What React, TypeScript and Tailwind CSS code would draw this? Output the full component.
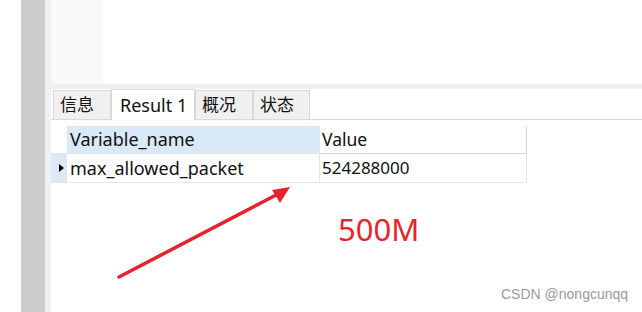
const font = { fontFamily: '"Noto Sans", "Noto Sans CJK SC", sans-serif' }

const tabs = [
  { label: "信息", w: "w-[58px]", active: false },
  { label: "Result 1", w: "w-[84px]", active: true },
  { label: "概况", w: "w-[58px]", active: false },
  { label: "状态", w: "w-[57px]", active: false },
]

function Arrow() {
  return (
    <svg className="absolute left-0 top-0" width="642" height="312" viewBox="0 0 642 312">
      <line x1="119" y1="277" x2="278" y2="194" stroke="#e8222b" strokeWidth="3.5" strokeLinecap="round" />
      <polygon points="290,187 272,190 280,203" fill="#e8222b" />
    </svg>
  )
}

export default function App() {
  return (
    <div className="relative flex h-[312px] w-[642px] overflow-hidden bg-white text-[#111]" style={font}>
      {/* left chrome */}
      <div className="w-[21px] shrink-0 bg-white" />
      <div className="w-[24px] shrink-0 bg-[#cccccc]" />
      <div className="w-[6px] shrink-0 bg-[#f0f0f0]" />

      <div className="flex flex-1 flex-col">
        {/* editor area */}
        <div className="flex h-[84px]">
          <div className="w-[52px] bg-[#f9f9f9]" />
          <div className="flex-1 bg-white" />
        </div>
        <div className="h-[5px] bg-[#f0f0f0]" />

        {/* tabs */}
        <div className="flex h-[31px] items-end border-b border-[#d9d9d9] pl-[2px]">
          {tabs.map((t) =>
            t.active ? (
              <div
                key={t.label}
                className={`${t.w} -mb-px flex h-[31px] items-center border border-b-0 border-[#d9d9d9] bg-white pl-[8px] text-[18px]`}
              >
                {t.label}
              </div>
            ) : (
              <div
                key={t.label}
                className={`${t.w} flex h-[29px] items-center border border-b-0 border-[#d9d9d9] bg-[#f0f0f0] pl-[6px] text-[17px]`}
              >
                {t.label}
              </div>
            ),
          )}
        </div>

        {/* result grid */}
        <div className="mt-[6px] flex w-[476px] flex-col">
          <div className="flex h-[28px]">
            <div className="w-[16px] border-b border-[#e5e5e5] bg-white" />
            <div className="flex w-[253px] items-center border-b border-r border-[#e5e5e5] bg-[#d9e9f7] pl-[3px] text-[18px]">
              Variable_name
            </div>
            <div className="flex w-[207px] items-center border-b border-r border-[#d4d4d4] bg-white pl-[2px] text-[17.5px]">
              Value
            </div>
          </div>
          <div className="flex h-[29px]">
            <div className="flex w-[16px] items-center justify-end border-b border-r border-[#e5e5e5] bg-[#dbe9f6] pr-[2px]">
              <span className="h-0 w-0 border-y-[4.5px] border-l-[5px] border-y-transparent border-l-black" />
            </div>
            <div className="flex w-[253px] items-center border-b border-r border-[#e5e5e5] pl-[3px] text-[18px]">
              max_allowed_packet
            </div>
            <div className="flex w-[207px] items-center border-b border-r border-[#e5e5e5] pl-[2px] text-[17px]">
              524288000
            </div>
          </div>
        </div>
      </div>

      {/* annotation */}
      <Arrow />
      <div className="absolute left-[338px] top-[214px] text-[31px] leading-none text-[#e3262d]">500M</div>
      <div
        className="absolute left-[501px] top-[287px] text-[14px] leading-none text-[#9a9a9a]"
        style={{ fontFamily: '"Liberation Sans", Arial, sans-serif' }}
      >
        CSDN @nongcunqq
      </div>
    </div>
  )
}
